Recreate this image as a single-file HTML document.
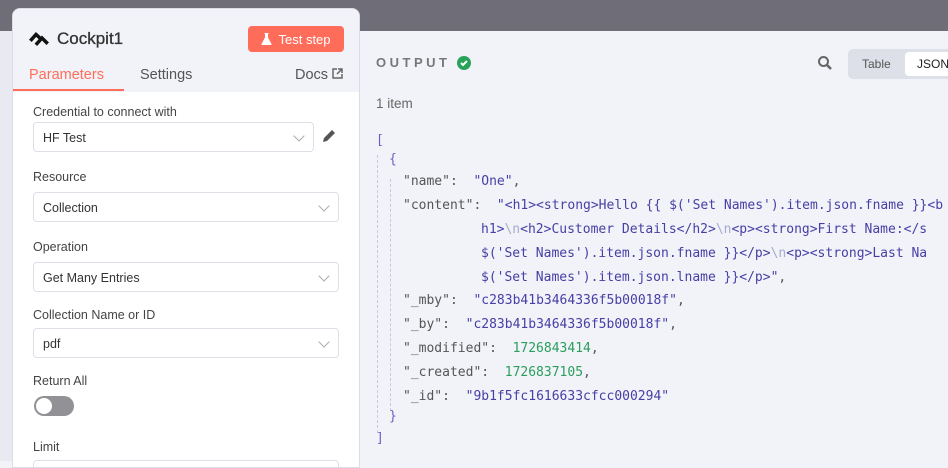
<!DOCTYPE html>
<html><head><style>
*{box-sizing:border-box;margin:0;padding:0}
body{width:948px;height:461px;overflow:hidden;background:#f2f3f8;font-family:"Liberation Sans",sans-serif;position:relative}
.top{position:absolute;left:0;top:0;width:948px;height:31px;background:#6f6e78}
.left{position:absolute;left:0;top:31px;width:13px;height:430px;background:#e8e9f1}
.panel{position:absolute;left:12px;top:8px;width:348px;height:460px;background:#fff;border-radius:8px 8px 0 0;border:1px solid #dcdde6;overflow:hidden}
.head{height:83px;background:#f2f3f8;position:relative}
.title{position:absolute;left:16px;top:20px;font-size:17px;color:#333;display:flex;align-items:center;gap:8px;-webkit-text-stroke:0.3px #333}
.btn{position:absolute;left:235px;top:17px;width:96px;height:26px;background:#ff6d5a;border-radius:4px;color:#fff;font-size:13px;display:flex;align-items:center;justify-content:center;gap:6px}
.tab{position:absolute;top:58px;font-size:14.5px}
.under{position:absolute;left:0;top:80px;width:111px;height:2px;background:#ff6d5a}
.lbl{position:absolute;left:20px;font-size:12.5px;color:#444}
.sel{position:absolute;left:20px;width:306px;height:30px;border:1px solid #dcdfe6;border-radius:4px;font-size:12.5px;color:#333;padding:8px 9px}
.sel:after{content:"";position:absolute;right:10px;top:9px;width:7px;height:7px;border-right:1px solid #aaa;border-bottom:1px solid #aaa;transform:rotate(45deg)}
.right{position:absolute;left:360px;top:33px;right:0;bottom:0}
.mono{font-family:"DejaVu Sans Mono","Liberation Mono",monospace;font-size:13px;position:absolute;white-space:pre;color:#555}
.s{color:#473ea6}.n{color:#2a9e5c}.b{color:#6a60c8}.e{color:#aaa8cf}
.guide{position:absolute;border-left:1px dashed #c8cad8}
</style></head><body>
<div class="top"></div><div class="left"></div>
<div class="panel">
 <div class="head">
  <div class="title"><svg width="20" height="16" viewBox="0 0 20 16"><path d="M2.5 8.5 L7 3.5 L12 8 M8 12.5 L13 7 L17.5 11.5" stroke="#111" stroke-width="3.5" fill="none" stroke-linecap="square"/></svg>Cockpit1</div>
  <div class="btn"><svg width="11" height="12" viewBox="0 0 11 12"><path d="M3.5 0h4v1h-0.5v3.5l3.5 6.5v1H0.5v-1l3.5-6.5V1H3.5z" fill="#fff"/></svg>Test step</div>
  <div class="tab" style="left:16px;color:#ff6d5a">Parameters</div>
  <div class="tab" style="left:127px;color:#555">Settings</div>
  <div class="tab" style="left:282px;color:#555">Docs <svg width="11" height="11" viewBox="0 0 11 11"><path d="M5 1H1v9h9V6" stroke="#666" stroke-width="1.5" fill="none"/><path d="M6 1h4v4M10 1L5 6" stroke="#666" stroke-width="1.5" fill="none"/></svg></div>
  <div class="under"></div>
 </div>
 <div class="lbl" style="top:96px">Credential to connect with</div>
 <div class="sel" style="top:113px;width:281px">HF Test</div>
 <svg style="position:absolute;left:308px;top:119px" width="16" height="16" viewBox="0 0 16 16"><path d="M2 14l1-4 8-8 3 3-8 8z" fill="#555"/></svg>
 <div class="lbl" style="top:161px">Resource</div>
 <div class="sel" style="top:183px">Collection</div>
 <div class="lbl" style="top:231px">Operation</div>
 <div class="sel" style="top:253px">Get Many Entries</div>
 <div class="lbl" style="top:299px">Collection Name or ID</div>
 <div class="sel" style="top:319px">pdf</div>
 <div class="lbl" style="top:365px">Return All</div>
 <div style="position:absolute;left:21px;top:387px;width:40px;height:20px;border-radius:10px;background:#919196"><div style="position:absolute;left:2px;top:2px;width:16px;height:16px;border-radius:50%;background:#fff"></div></div>
 <div class="lbl" style="top:431px">Limit</div>
 <div class="sel" style="top:451px"></div>
</div>
<div class="right">
 <div style="position:absolute;left:16px;top:22px;font-size:13px;letter-spacing:3.5px;color:#777;font-weight:bold">OUTPUT</div>
 <svg style="position:absolute;left:97px;top:23px" width="14" height="14" viewBox="0 0 14 14"><circle cx="7" cy="7" r="7" fill="#29a35a"/><path d="M4 7l2 2 4-4" stroke="#fff" stroke-width="2" fill="none"/></svg>
 <svg style="position:absolute;left:457px;top:22px" width="16" height="16" viewBox="0 0 16 16"><circle cx="6.5" cy="6.5" r="4.5" stroke="#666" stroke-width="2" fill="none"/><path d="M10 10l4 4" stroke="#666" stroke-width="2.5"/></svg>
 <div style="position:absolute;left:488px;top:16px;width:110px;height:30px;background:#dde0e8;border-radius:5px"></div>
 <div style="position:absolute;left:502px;top:24px;font-size:12px;color:#555">Table</div>
 <div style="position:absolute;left:545px;top:19px;width:60px;height:24px;background:#fff;border-radius:4px;font-size:12px;color:#222;padding:5px 12px">JSON</div>
 <div style="position:absolute;left:16px;top:63px;font-size:13.5px;color:#666">1 item</div>
 <div class="guide" style="left:17px;top:122px;height:278px"></div>
 <div class="guide" style="left:30px;top:146px;height:232px"></div>
 <div class="mono b" style="left:16px;top:100px">[</div>
 <div class="mono b" style="left:29px;top:119px">{</div>
 <div class="mono" style="left:43px;top:141px">"name":  <span class="s">"One"</span>,</div>
 <div class="mono" style="left:43px;top:165px">"content":  <span class="s">"&lt;h1&gt;&lt;strong&gt;Hello {{ $('Set Names').item.json.fname }}&lt;b</span></div>
 <div class="mono s" style="left:121px;top:189px">h1&gt;<span class="e">\n</span>&lt;h2&gt;Customer Details&lt;/h2&gt;<span class="e">\n</span>&lt;p&gt;&lt;strong&gt;First Name:&lt;/s</div>
 <div class="mono s" style="left:121px;top:213px">$('Set Names').item.json.fname }}&lt;/p&gt;<span class="e">\n</span>&lt;p&gt;&lt;strong&gt;Last Na</div>
 <div class="mono s" style="left:121px;top:237px">$('Set Names').item.json.lname }}&lt;/p&gt;"<span style="color:#555">,</span></div>
 <div class="mono" style="left:43px;top:260px">"_mby":  <span class="s">"c283b41b3464336f5b00018f"</span>,</div>
 <div class="mono" style="left:43px;top:284px">"_by":  <span class="s">"c283b41b3464336f5b00018f"</span>,</div>
 <div class="mono" style="left:43px;top:308px">"_modified":  <span class="n">1726843414</span>,</div>
 <div class="mono" style="left:43px;top:332px">"_created":  <span class="n">1726837105</span>,</div>
 <div class="mono" style="left:43px;top:356px">"_id":  <span class="s">"9b1f5fc1616633cfcc000294"</span></div>
 <div class="mono b" style="left:29px;top:376px">}</div>
 <div class="mono b" style="left:16px;top:398px">]</div>
</div>
</body></html>
